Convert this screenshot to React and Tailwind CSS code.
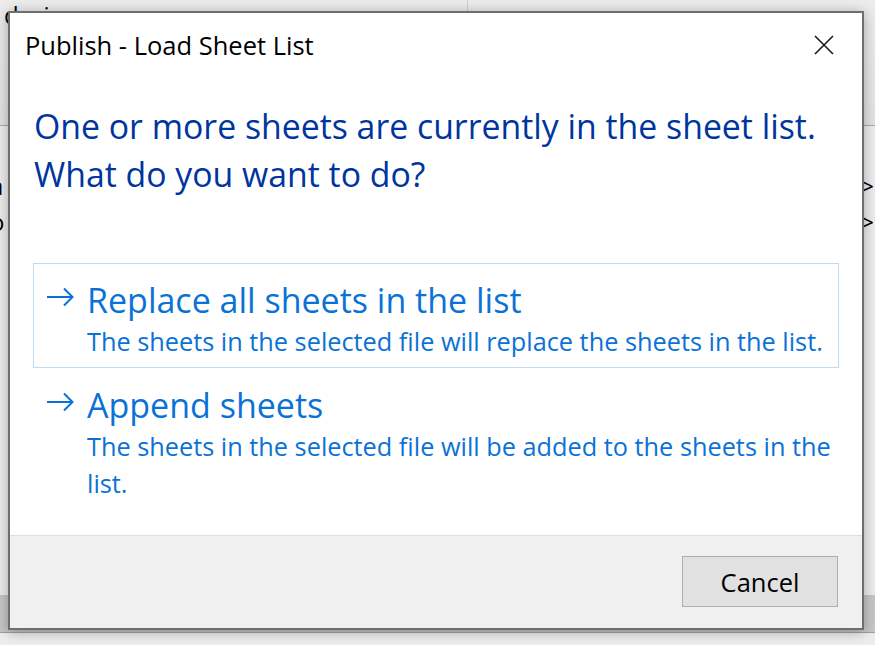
const font = { fontFamily: "'Open Sans', 'Noto Sans', sans-serif" };

const Arrow = () => (
  <svg width="28" height="20" viewBox="0 0 28 20" fill="none" className="shrink-0">
    <path d="M1 10H26.5M18 1.5L26.5 10L18 18.5" stroke="#0a72d6" strokeWidth="2" />
  </svg>
);

const Option = ({ title, note, active }) => (
  <div
    className={`flex gap-[13px] border pl-[12px] pr-[3px] pt-[13px] pb-[7px] ${
      active ? "border-[#bcdcf4]" : "border-transparent"
    }`}
  >
    <div className="h-[46px] flex items-center -mt-[3px]">
      <Arrow />
    </div>
    <div className="flex-1 text-[#0a72d6]">
      <div className="text-[34px] leading-[46px]">{title}</div>
      <div className="text-[25.3px] leading-[37px]">{note}</div>
    </div>
  </div>
);

export default function App() {
  return (
    <div className="relative w-[875px] h-[645px] overflow-hidden bg-[#ececec] text-black" style={font}>
      {/* app behind the dialog */}
      <div className="flex flex-col h-full">
        <div className="h-[126px] flex bg-gradient-to-b from-[#ececec] to-[#e2e2e2] border-b border-[#a8a8a8]">
          <div className="w-[468px] border-r border-[#cfcfcf] pl-[4px] text-[24px] leading-[30px]">design</div>
          <div className="flex-1" />
        </div>
        <div className="flex-1 flex flex-col pt-[42px] gap-[1px] text-[24px] leading-[35px]">
          <div className="flex justify-between">
            <span className="-ml-[10px]">a</span>
            <span className="pr-[1px]">&gt;</span>
          </div>
          <div className="flex justify-between">
            <span className="-ml-[10px]">o</span>
            <span className="pr-[1px]">&gt;</span>
          </div>
        </div>
        <div className="h-[38px] bg-[#c6c6c6] border-b border-[#a0a0a0]" />
        <div className="h-[12px] bg-[#ededed]" />
      </div>

      {/* dialog window */}
      <div className="absolute left-[8px] top-[11px] w-[856px] h-[619px] border-2 border-[#6e6e6e] bg-white flex flex-col shadow-[0_2px_12px_rgba(0,0,0,0.3)]">
        <div className="h-[64px] flex items-center justify-between pl-[15px] pr-[28px]">
          <span className="text-[25.5px]">Publish - Load Sheet List</span>
          <svg width="20" height="20" viewBox="0 0 20 20">
            <path d="M1 1L19 19M19 1L1 19" stroke="#1a1a1a" strokeWidth="1.6" />
          </svg>
        </div>

        <div className="pl-[24px] pt-[25px] text-[33.8px] leading-[48px] text-[#0035a0]">
          One or more sheets are currently in the sheet list.
          <br />
          What do you want to do?
        </div>

        <div className="mx-[23px] mt-[65px] flex flex-col">
          <Option
            active
            title="Replace all sheets in the list"
            note="The sheets in the selected file will replace the sheets in the list."
          />
          <Option
            title="Append sheets"
            note="The sheets in the selected file will be added to the sheets in the list."
          />
        </div>

        <div className="mt-auto h-[93px] bg-[#f0f0f0] border-t border-[#dfdfdf] flex justify-end pt-[20px] pr-[24px]">
          <button className="w-[156px] h-[51px] bg-[#e1e1e1] border border-[#adadad] text-[25.5px] leading-[51px]">
            Cancel
          </button>
        </div>
      </div>
    </div>
  );
}
